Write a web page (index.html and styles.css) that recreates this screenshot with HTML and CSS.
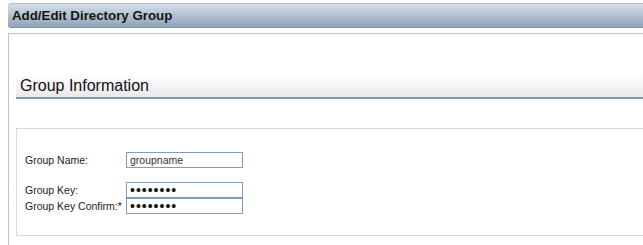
FILE: index.html
```html
<!DOCTYPE html>
<html>
<head>
<meta charset="utf-8">
<link rel="stylesheet" href="styles.css">
</head>
<body>
<div class="page">
  <div class="titlebar">Add/Edit Directory Group</div>
  <div class="panel">
    <div class="section-head">Group Information</div>
    <div class="formbox">
      <div class="grid">
        <label class="lbl">Group Name:</label>
        <input class="field" type="text" value="groupname">
        <div class="spacer"></div>
        <label class="lbl">Group Key:</label>
        <input class="field" type="password" value="12345678">
        <label class="lbl">Group Key Confirm:*</label>
        <input class="field" type="password" value="12345678">
      </div>
    </div>
  </div>
</div>
</body>
</html>
```
FILE: styles.css
```css
html, body {
  margin: 0;
  padding: 0;
  background: #ffffff;
  overflow: hidden;
}
.page {
  width: 660px;
  padding: 3px 0 0 8px;
  font-family: "Liberation Sans", Arial, sans-serif;
}
.titlebar {
  height: 23px;
  border-top: 1px solid #b3c0ce;
  border-bottom: 1px solid #7d93ab;
  border-radius: 3px 0 0 3px;
  background: linear-gradient(#d4dde7, #b3c1d1 50%, #8fa3ba);
  font-weight: bold;
  font-size: 13.3px;
  color: #151515;
  line-height: 23px;
  padding-left: 4px;
}
.panel {
  margin-top: 5px;
  border-top: 1px solid #b8c5d3;
  border-left: 1px solid #b8c5d3;
  padding: 40px 0 0 7px;
  height: 171px;
}
.section-head {
  height: 23px;
  border-bottom: 2px solid #7f97af;
  background: linear-gradient(#ffffff, #faf8fa 30%, #ebe8eb);
  font-size: 16px;
  color: #111;
  line-height: 23px;
  padding-left: 4px;
}
.formbox {
  margin-top: 29px;
  border: 1px solid #dadada;
  border-right: none;
  height: 108px;
  padding: 23px 0 0 8px;
  box-sizing: border-box;
}
.grid {
  display: grid;
  grid-template-columns: 101px 117px;
  grid-template-rows: 16px 14px 16px 16px;
  align-items: center;
}
.spacer {
  grid-column: 1 / 3;
}
.lbl {
  font-size: 10.5px;
  color: #222;
}
.field {
  box-sizing: border-box;
  width: 117px;
  height: 16px;
  margin: 0;
  padding: 0 3px;
  border: 1px solid #7f9db9;
  font-family: "Liberation Sans", Arial, sans-serif;
  font-size: 10.5px;
  color: #333;
  background: #fff;
  outline: none;
}
.field[type="password"] {
  font-size: 14px;
  letter-spacing: 1px;
  color: #111;
}
```
